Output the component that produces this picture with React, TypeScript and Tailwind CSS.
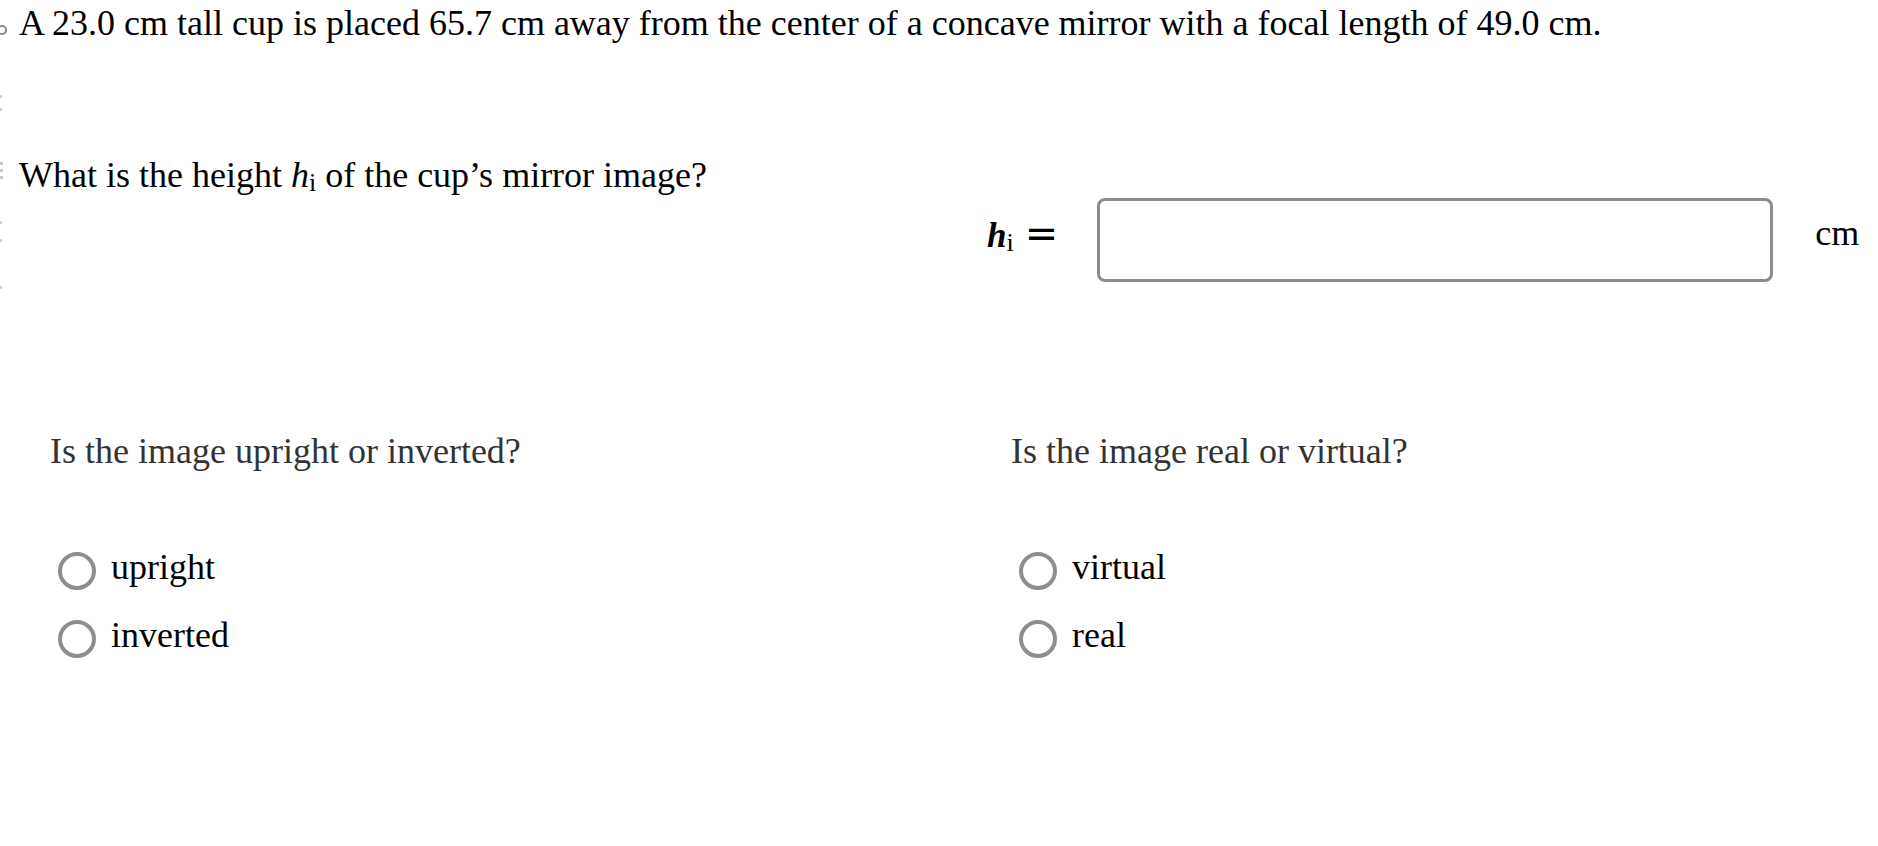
import React from "react";

function Radio({ label }: { label: string }) {
  return (
    <div className="flex items-start h-[41px] ml-[8px]">
      <span className="mt-[5px] w-[38px] h-[38px] rounded-full border-[4px] border-[#8e8e8e] bg-white shrink-0" />
      <span className="ml-[15px] text-black">{label}</span>
    </div>
  );
}

function Question({ text, options, className }: { text: string; options: string[]; className: string }) {
  return (
    <div className={className}>
      <p className="text-[#333333] whitespace-nowrap">{text}</p>
      <div className="mt-[75px] flex flex-col gap-[27px]">
        {options.map((o) => (
          <Radio key={o} label={o} />
        ))}
      </div>
    </div>
  );
}

export default function App() {
  return (
    <div className="relative min-h-[846px] w-[1878px] bg-white overflow-hidden font-['Liberation_Serif','Times_New_Roman',serif] text-[36px] leading-[41px] text-black">
      {/* edge artifacts */}
      <span className="absolute left-[-3px] top-[25px] w-[10px] h-[10px] rounded-full border-[2px] border-[#8a8a8a]" />
      <div className="absolute left-0 top-[95px] flex flex-col">
        <span className="w-[2px] h-[3px] bg-[#d0d0d0]" />
        <span className="mt-[10px] w-[2px] h-[3px] bg-[#d0d0d0]" />
        <span className="mt-[51px] w-[3px] h-[3px] bg-[#c8c8c8]" />
        <span className="mt-[4px] w-[3px] h-[3px] bg-[#c8c8c8]" />
        <span className="mt-[4px] w-[3px] h-[3px] bg-[#c8c8c8]" />
        <span className="mt-[42px] w-[2px] h-[3px] bg-[#d0d0d0]" />
        <span className="mt-[15px] w-[2px] h-[3px] bg-[#d0d0d0]" />
        <span className="mt-[44px] w-[2px] h-[3px] bg-[#d0d0d0]" />
      </div>

      <div className="pl-[19px] pt-[3px]">
        <p className="whitespace-nowrap">
          A 23.0 cm tall cup is placed 65.7 cm away from the center of a concave mirror with a focal length of 49.0 cm.
        </p>

        <p className="mt-[111px] whitespace-nowrap">
          What is the height <span className="italic">h</span>
          <span className="relative top-[4px] text-[26px] leading-none">i</span> of the cup’s mirror image?
        </p>

        <div className="mt-[2px] ml-[968px] flex items-start">
          <div className="mt-[15px] flex items-baseline whitespace-nowrap">
            <span className="italic font-bold text-[35px]">h</span>
            <span className="relative top-[4px] text-[26px] leading-none">i</span>
            <span className="ml-[11px] font-['DejaVu_Sans',sans-serif] text-[40px] leading-none">=</span>
          </div>
          <div className="ml-[39px] w-[676px] h-[84px] rounded-[8px] border-[3px] border-[#8c8c8c] bg-white" />
          <span className="mt-[15px] ml-[42px]">cm</span>
        </div>

        <div className="mt-[149px] flex">
          <Question className="w-[992px] pl-[31px]" text="Is the image upright or inverted?" options={["upright", "inverted"]} />
          <Question className="flex-1" text="Is the image real or virtual?" options={["virtual", "real"]} />
        </div>
      </div>
    </div>
  );
}
